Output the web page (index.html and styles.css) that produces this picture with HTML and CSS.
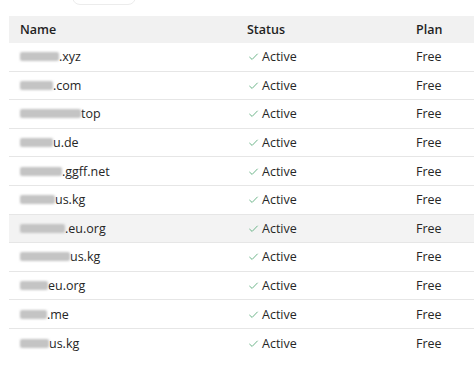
FILE: index.html
```html
<!DOCTYPE html>
<html>
<head>
  <title>Domains</title>
  <link rel="stylesheet" href="styles.css">
</head>
<body>
  <div class="toolbar">
    <div class="search-box"></div>
  </div>

  <div class="table">
    <div class="row head">
      <div class="cell name">Name</div>
      <div class="cell status">Status</div>
      <div class="cell plan">Plan</div>
    </div>

    <div class="row">
      <div class="cell name"><span class="mask" style="width: 39px"></span>.xyz</div>
      <div class="cell status"><svg class="check" viewBox="0 0 12 12"><path d="M1.5 6.5 L4.5 9.2 L10.5 3"/></svg>Active</div>
      <div class="cell plan">Free</div>
    </div>
    <div class="row">
      <div class="cell name"><span class="mask" style="width: 33px"></span>.com</div>
      <div class="cell status"><svg class="check" viewBox="0 0 12 12"><path d="M1.5 6.5 L4.5 9.2 L10.5 3"/></svg>Active</div>
      <div class="cell plan">Free</div>
    </div>
    <div class="row">
      <div class="cell name"><span class="mask" style="width: 61px"></span>top</div>
      <div class="cell status"><svg class="check" viewBox="0 0 12 12"><path d="M1.5 6.5 L4.5 9.2 L10.5 3"/></svg>Active</div>
      <div class="cell plan">Free</div>
    </div>
    <div class="row">
      <div class="cell name"><span class="mask" style="width: 33px"></span>u.de</div>
      <div class="cell status"><svg class="check" viewBox="0 0 12 12"><path d="M1.5 6.5 L4.5 9.2 L10.5 3"/></svg>Active</div>
      <div class="cell plan">Free</div>
    </div>
    <div class="row">
      <div class="cell name"><span class="mask" style="width: 42px"></span>.ggff.net</div>
      <div class="cell status"><svg class="check" viewBox="0 0 12 12"><path d="M1.5 6.5 L4.5 9.2 L10.5 3"/></svg>Active</div>
      <div class="cell plan">Free</div>
    </div>
    <div class="row">
      <div class="cell name"><span class="mask" style="width: 35px"></span>us.kg</div>
      <div class="cell status"><svg class="check" viewBox="0 0 12 12"><path d="M1.5 6.5 L4.5 9.2 L10.5 3"/></svg>Active</div>
      <div class="cell plan">Free</div>
    </div>
    <div class="row hover">
      <div class="cell name"><span class="mask" style="width: 45px"></span>.eu.org</div>
      <div class="cell status"><svg class="check" viewBox="0 0 12 12"><path d="M1.5 6.5 L4.5 9.2 L10.5 3"/></svg>Active</div>
      <div class="cell plan">Free</div>
    </div>
    <div class="row">
      <div class="cell name"><span class="mask" style="width: 50px"></span>us.kg</div>
      <div class="cell status"><svg class="check" viewBox="0 0 12 12"><path d="M1.5 6.5 L4.5 9.2 L10.5 3"/></svg>Active</div>
      <div class="cell plan">Free</div>
    </div>
    <div class="row">
      <div class="cell name"><span class="mask" style="width: 28px"></span>eu.org</div>
      <div class="cell status"><svg class="check" viewBox="0 0 12 12"><path d="M1.5 6.5 L4.5 9.2 L10.5 3"/></svg>Active</div>
      <div class="cell plan">Free</div>
    </div>
    <div class="row">
      <div class="cell name"><span class="mask" style="width: 27px"></span>.me</div>
      <div class="cell status"><svg class="check" viewBox="0 0 12 12"><path d="M1.5 6.5 L4.5 9.2 L10.5 3"/></svg>Active</div>
      <div class="cell plan">Free</div>
    </div>
    <div class="row last">
      <div class="cell name"><span class="mask" style="width: 29px"></span>us.kg</div>
      <div class="cell status"><svg class="check" viewBox="0 0 12 12"><path d="M1.5 6.5 L4.5 9.2 L10.5 3"/></svg>Active</div>
      <div class="cell plan">Free</div>
    </div>
  </div>
</body>
</html>
```

FILE: styles.css
```css
body {
  margin: 0;
  padding: 0;
  font-family: 'Open Sans', 'Noto Sans', sans-serif;
  font-size: 12.5px;
  color: #262626;
  background-color: white;
  overflow: hidden;
}

/* only the bottom edge of the search box shows */
.toolbar {
  display: flex;
  align-items: flex-end;
  height: 5px;
  padding-left: 72px;
}

.search-box {
  flex-shrink: 0;
  width: 64px;
  height: 20px;
  border: 1px solid #ececec;
  border-radius: 8px;
  box-sizing: border-box;
}

.table {
  margin-top: 11px;
  margin-left: 9px;
}

.row {
  display: flex;
  align-items: center;
  height: 28.6px;
  border-bottom: 1px solid #e6e6e6;
  box-sizing: border-box;
}

.row.head {
  height: 27px;
  background-color: #f1f1f1;
  border-bottom: none;
  font-weight: 600;
  color: #1f1f1f;
}

.row.hover {
  background-color: #f3f3f3;
}

.row.last {
  border-bottom: none;
}

.cell {
  display: flex;
  align-items: center;
  box-sizing: border-box;
}

.cell.name {
  width: 238px;
  padding-left: 11px;
}

.cell.status {
  width: 169px;
}

.mask {
  display: inline-block;
  height: 9px;
  background-color: #c4c4c4;
  border-radius: 2px;
  filter: blur(1.2px);
}

.check {
  width: 11px;
  height: 11px;
  margin: 0 3px 0 1px;
  fill: none;
  stroke: #5fae7f;
  stroke-width: 1;
}
```
